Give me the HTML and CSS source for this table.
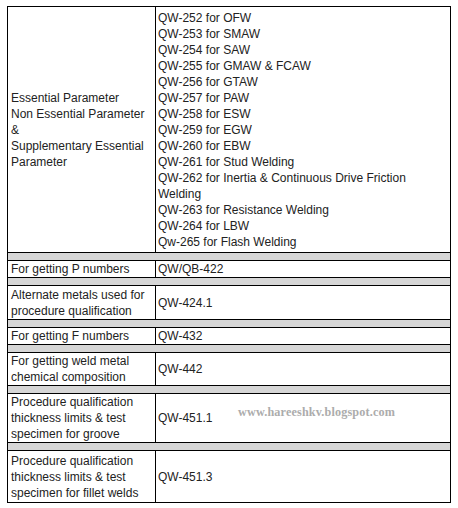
FILE: index.html
```html
<!DOCTYPE html>
<html>
<head>
<meta charset="utf-8">
<link rel="stylesheet" href="styles.css">
</head>
<body>
<div class="sheet">
  <table class="grid">
    <colgroup><col class="c1"><col class="c2"></colgroup>
    <tr class="r-ess">
      <td class="lbl">Essential Parameter<br>Non Essential Parameter<br>&amp;<br>Supplementary Essential<br>Parameter</td>
      <td class="val">QW-252 for OFW<br>QW-253 for SMAW<br>QW-254 for SAW<br>QW-255 for GMAW &amp; FCAW<br>QW-256 for GTAW<br>QW-257 for PAW<br>QW-258 for ESW<br>QW-259 for EGW<br>QW-260 for EBW<br>QW-261 for Stud Welding<br>QW-262 for Inertia &amp; Continuous Drive Friction<br>Welding<br>QW-263 for Resistance Welding<br>QW-264 for LBW<br>Qw-265 for Flash Welding</td>
    </tr>
    <tr class="sep"><td colspan="2"></td></tr>
    <tr class="r16"><td class="lbl">For getting P numbers</td><td class="val">QW/QB-422</td></tr>
    <tr class="sep"><td colspan="2"></td></tr>
    <tr class="r34"><td class="lbl">Alternate metals used for<br>procedure qualification</td><td class="val">QW-424.1</td></tr>
    <tr class="sep"><td colspan="2"></td></tr>
    <tr class="r16"><td class="lbl">For getting F numbers</td><td class="val">QW-432</td></tr>
    <tr class="sep"><td colspan="2"></td></tr>
    <tr class="r33"><td class="lbl">For getting weld metal<br>chemical composition</td><td class="val">QW-442</td></tr>
    <tr class="sep"><td colspan="2"></td></tr>
    <tr class="r49"><td class="lbl">Procedure qualification<br>thickness limits &amp; test<br>specimen for groove</td><td class="val">QW-451.1</td></tr>
    <tr class="sep"><td colspan="2"></td></tr>
    <tr class="r52"><td class="lbl">Procedure qualification<br>thickness limits &amp; test<br>specimen for fillet welds</td><td class="val">QW-451.3</td></tr>
  </table>
  <div class="mark">www.hareeshkv.blogspot.com</div>
</div>
</body>
</html>
```
FILE: styles.css
```css
html, body {
  margin: 0;
  padding: 0;
  background: #fff;
}
.sheet {
  position: relative;
  padding: 6px 0 0 7px;
  width: 458px;
  height: 508px;
  box-sizing: border-box;
}
.grid {
  border-collapse: collapse;
  width: 443px;
  table-layout: fixed;
  font-family: "Liberation Sans", Arial, sans-serif;
  font-size: 12px;
  line-height: 16px;
  color: #222;
}
.c1 { width: 148px; }
.c2 { width: 295px; }
.grid td {
  border: 1px solid #000;
  padding: 0 2px 0 3px;
  vertical-align: middle;
  white-space: nowrap;
}
.grid td.val { padding-left: 2px; }
.r-ess td { height: 245px; }
.r16 td { height: 15px; }
.r34 td { height: 33px; }
.r33 td { height: 32px; }
.r49 td { height: 48px; }
.r52 td { height: 51px; }
.sep td {
  height: 7px;
  padding: 0;
  background: #d6d6d6;
}
.mark {
  position: absolute;
  left: 238px;
  top: 405px;
  font-family: "Liberation Serif", "Times New Roman", serif;
  font-weight: bold;
  font-size: 12.2px;
  color: #acacac;
  letter-spacing: 0.15px;
}
```
